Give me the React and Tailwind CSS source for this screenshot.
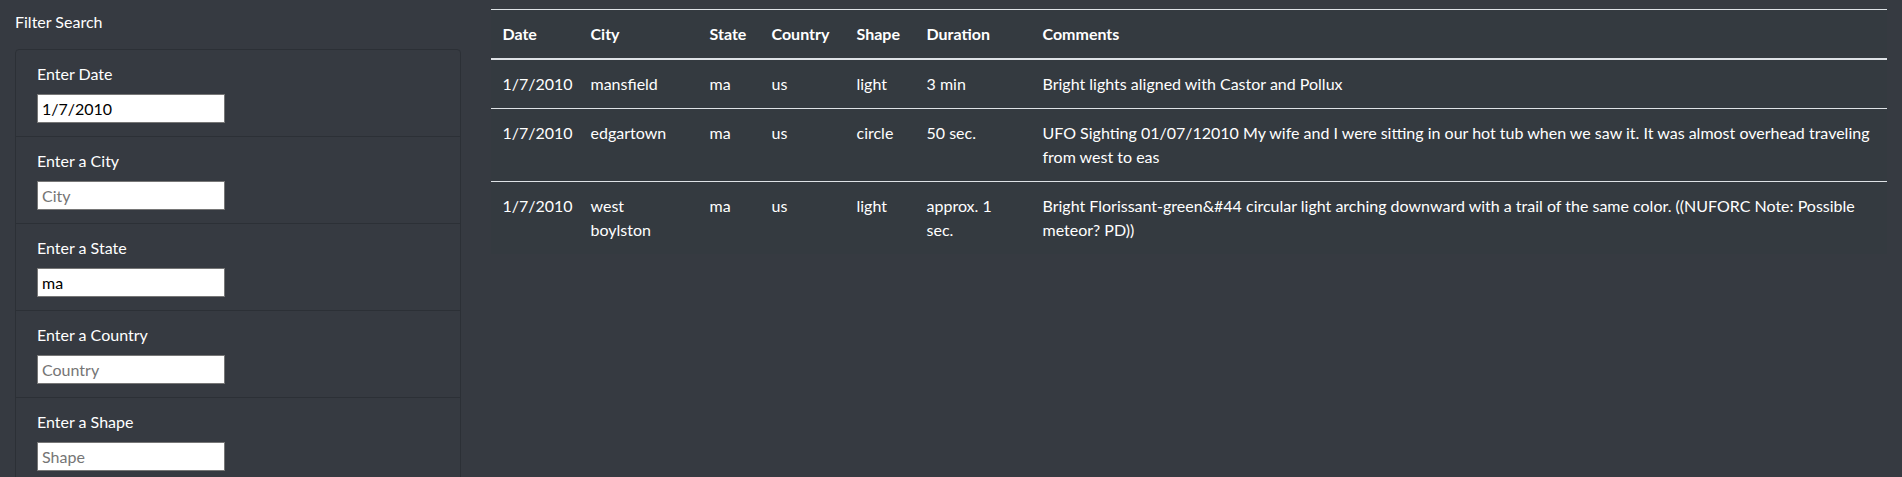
import { useState } from "react"

const filters = [
  { label: "Enter Date", placeholder: "1/7/2010", value: "1/7/2010" },
  { label: "Enter a City", placeholder: "City", value: "" },
  { label: "Enter a State", placeholder: "State", value: "ma" },
  { label: "Enter a Country", placeholder: "Country", value: "" },
  { label: "Enter a Shape", placeholder: "Shape", value: "" },
]

const sightings = [
  {
    date: "1/7/2010",
    city: "mansfield",
    state: "ma",
    country: "us",
    shape: "light",
    duration: "3 min",
    comments: "Bright lights aligned with Castor and Pollux",
  },
  {
    date: "1/7/2010",
    city: "edgartown",
    state: "ma",
    country: "us",
    shape: "circle",
    duration: "50 sec.",
    comments:
      "UFO Sighting 01/07/12010 My wife and I were sitting in our hot tub when we saw it. It was almost overhead traveling from west to eas",
  },
  {
    date: "1/7/2010",
    city: "west boylston",
    state: "ma",
    country: "us",
    shape: "light",
    duration: "approx. 1 sec.",
    comments:
      "Bright Florissant-green&#44 circular light arching downward with a trail of the same color. ((NUFORC Note: Possible meteor? PD))",
  },
]

const columns = [
  { key: "date", title: "Date", width: "w-[88px]" },
  { key: "city", title: "City", width: "w-[119px]" },
  { key: "state", title: "State", width: "w-[62px]" },
  { key: "country", title: "Country", width: "w-[85px]" },
  { key: "shape", title: "Shape", width: "w-[70px]" },
  { key: "duration", title: "Duration", width: "w-[116px]" },
  { key: "comments", title: "Comments", width: "" },
]

const FilterItem = ({ label, placeholder, value, onChange }) => (
  <li className="px-[21px] pt-3 pb-[13px] border-b border-[#2c3036] last:border-b-0">
    <label className="block mb-2 leading-6">{label}</label>
    <input
      type="text"
      value={value}
      placeholder={placeholder}
      onChange={onChange}
      className="block w-[188px] h-[29px] px-[4px] bg-white text-black border border-[#767676] text-[16px] placeholder:text-[#757575] outline-none"
    />
  </li>
)

const App = () => {
  const [values, setValues] = useState(filters.map((f) => f.value))

  return (
    <div className="min-h-screen bg-[#363a41] text-white font-['Lato','Noto_Sans',sans-serif] text-[16px] flex">
      <aside className="w-1/4 px-[15px]">
        <h5 className="pt-[10px] pb-[4px] leading-6">Filter Search</h5>
        <ul className="mt-[11px] border border-[#2c3036] rounded-[4px]">
          {filters.map((f, i) => (
            <FilterItem
              key={f.label}
              label={f.label}
              placeholder={f.placeholder}
              value={values[i]}
              onChange={(e) => {
                const next = [...values]
                next[i] = e.target.value
                setValues(next)
              }}
            />
          ))}
        </ul>
      </aside>

      <main className="w-3/4 px-[15px] pt-[9px]">
        <table className="w-full table-fixed bg-[#343a40] border-collapse">
          <thead>
            <tr className="border-t border-[#dee2e6] border-b-2">
              {columns.map((c) => (
                <th key={c.key} className={`${c.width} px-3 py-3 text-left font-bold leading-6`}>
                  {c.title}
                </th>
              ))}
            </tr>
          </thead>
          <tbody>
            {sightings.map((s, i) => (
              <tr key={i} className={i > 0 ? "border-t border-[#dee2e6]" : ""}>
                {columns.map((c) => (
                  <td key={c.key} className="px-3 py-3 align-top leading-6">
                    {s[c.key]}
                  </td>
                ))}
              </tr>
            ))}
          </tbody>
        </table>
      </main>
    </div>
  )
}

export default App
